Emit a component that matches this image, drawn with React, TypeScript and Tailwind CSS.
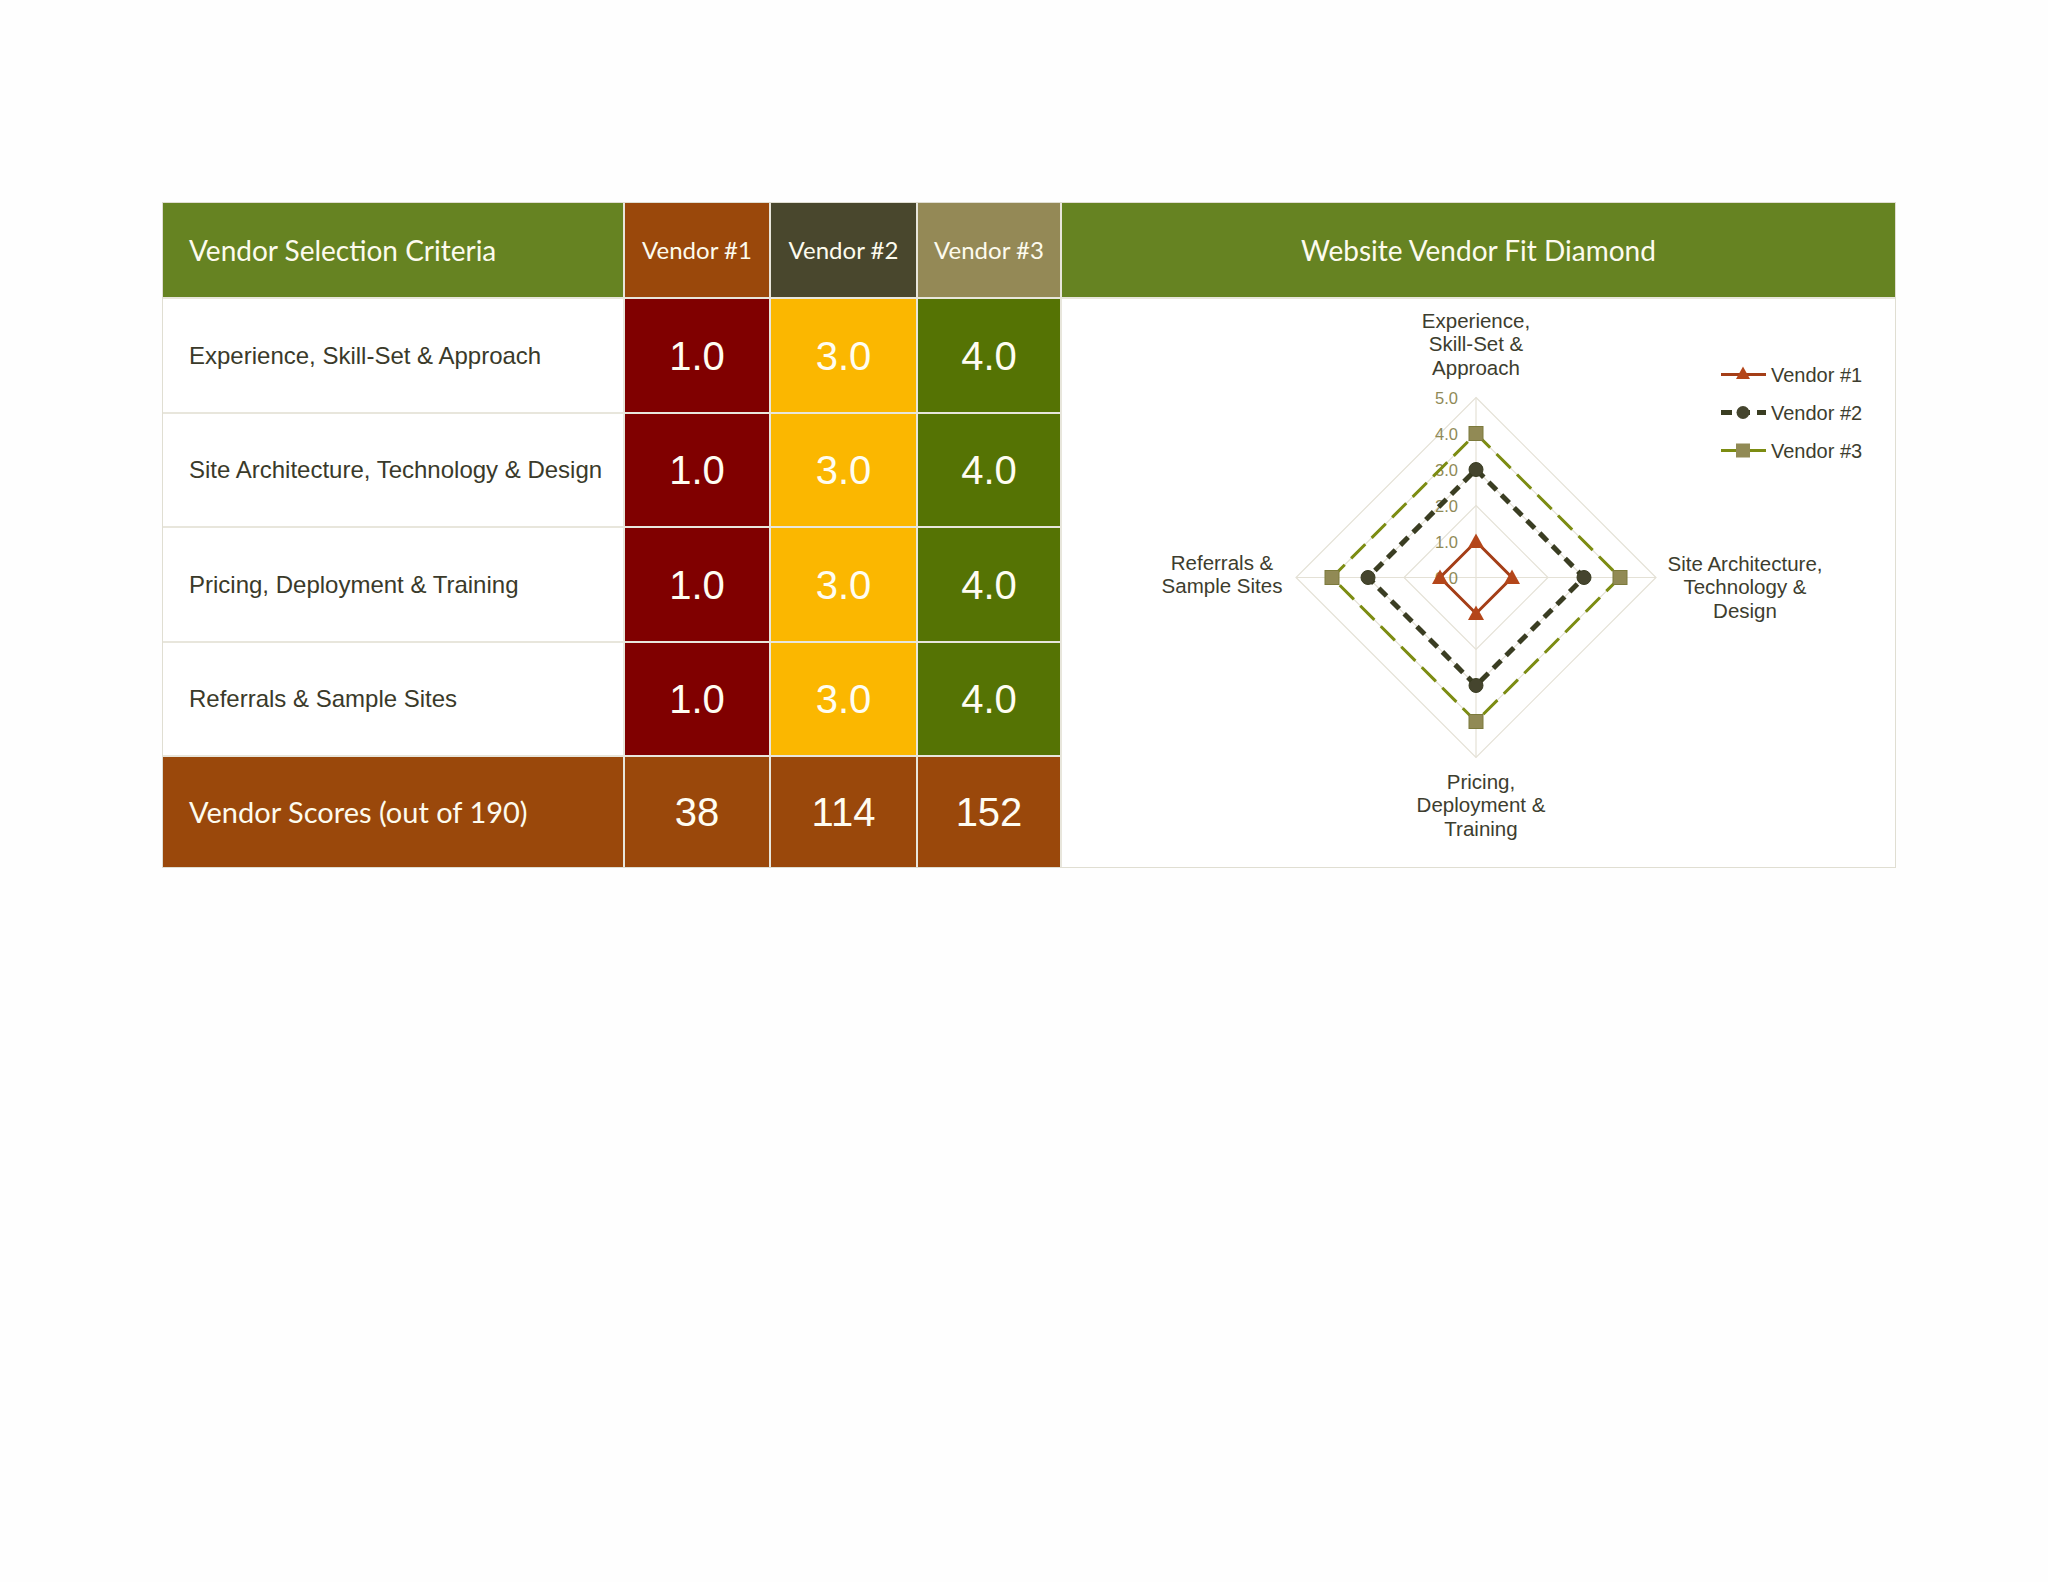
const criteria = [
  'Experience, Skill-Set & Approach',
  'Site Architecture, Technology & Design',
  'Pricing, Deployment & Training',
  'Referrals & Sample Sites',
]

const cx = 414
const cy = 277
const unit = 36

function diamond(r: number) {
  return `${cx},${cy - r} ${cx + r},${cy} ${cx},${cy + r} ${cx - r},${cy}`
}

function FitDiamond() {
  const v1 = unit * 1
  const v2 = unit * 3
  const v3 = unit * 4
  const pts = (r: number) => [
    [cx, cy - r],
    [cx + r, cy],
    [cx, cy + r],
    [cx - r, cy],
  ]
  const tri = (x: number, y: number, s = 8) => `${x},${y - s} ${x + s},${y + s * 0.8} ${x - s},${y + s * 0.8}`
  return (
    <svg width="100%" height="100%" viewBox="0 0 833 565" className="block">
      {/* grid */}
      {[1, 2, 3, 4, 5].map((k) => (
        <polygon key={k} points={diamond(k * unit)} fill="none" stroke="#e4e1d6" strokeWidth="1.2" />
      ))}
      <line x1={cx} y1={cy - 5 * unit} x2={cx} y2={cy + 5 * unit} stroke="#e4e1d6" strokeWidth="1.2" />
      <line x1={cx - 5 * unit} y1={cy} x2={cx + 5 * unit} y2={cy} stroke="#e4e1d6" strokeWidth="1.2" />

      {/* tick labels */}
      <g fontFamily="Liberation Sans, Arial, sans-serif" fontSize="16.5" fill="#8f8a57" textAnchor="end">
        {[0, 1, 2, 3, 4, 5].map((k) => (
          <text key={k} x={cx - 18} y={cy - k * unit + 6}>{`${k}.0`}</text>
        ))}
      </g>

      {/* vendor #3 */}
      <polygon points={diamond(v3)} fill="none" stroke="#7c8c12" strokeWidth="3" strokeDasharray="20 9" />
      {pts(v3).map(([x, y], i) => (
        <rect key={i} x={x - 7} y={y - 7} width="14" height="14" fill="#918a55" stroke="#7c7a3c" strokeWidth="1" />
      ))}

      {/* vendor #2 */}
      <polygon points={diamond(v2)} fill="none" stroke="#3a3d22" strokeWidth="5" strokeDasharray="11 7" />
      {pts(v2).map(([x, y], i) => (
        <circle key={i} cx={x} cy={y} r="7" fill="#45452e" stroke="#3a3d22" strokeWidth="1" />
      ))}

      {/* vendor #1 */}
      <polygon points={diamond(v1)} fill="none" stroke="#a43e17" strokeWidth="3" />
      {pts(v1).map(([x, y], i) => (
        <polygon key={i} points={tri(x, y)} fill="#b4461a" />
      ))}

      {/* category labels */}
      <g fontFamily="Liberation Sans, Arial, sans-serif" fontSize="20.5" fill="#3d3d2e" textAnchor="middle">
        <text x="414" y="27">Experience,</text>
        <text x="414" y="50.5">Skill-Set &amp;</text>
        <text x="414" y="74">Approach</text>

        <text x="683" y="270">Site Architecture,</text>
        <text x="683" y="293.5">Technology &amp;</text>
        <text x="683" y="317">Design</text>

        <text x="419" y="488">Pricing,</text>
        <text x="419" y="511.5">Deployment &amp;</text>
        <text x="419" y="535">Training</text>

        <text x="160" y="269">Referrals &amp;</text>
        <text x="160" y="292.5">Sample Sites</text>
      </g>

      {/* legend */}
      <g fontFamily="Liberation Sans, Arial, sans-serif" fontSize="20" fill="#3d3d2e">
        <line x1="659" y1="74" x2="704" y2="74" stroke="#a43e17" strokeWidth="3" />
        <polygon points={tri(681, 73, 7)} fill="#b4461a" />
        <text x="709" y="81">Vendor #1</text>

        <line x1="659" y1="112" x2="704" y2="112" stroke="#3a3d22" strokeWidth="5" strokeDasharray="11 7" />
        <circle cx="681" cy="112" r="6.5" fill="#45452e" />
        <text x="709" y="119">Vendor #2</text>

        <line x1="659" y1="150" x2="704" y2="150" stroke="#7c8c12" strokeWidth="3" strokeDasharray="20 9" />
        <rect x="674" y="143" width="14" height="14" fill="#918a55" />
        <text x="709" y="157">Vendor #3</text>
      </g>
    </svg>
  )
}

export default function App() {
  const head = "font-['Lato'] text-[#fdfbee]"
  const num = "font-['Liberation_Sans'] text-[40px] text-[#fffdf2] flex items-center justify-center"
  const crit = "bg-white flex items-center pl-[26px] font-['Liberation_Sans'] text-[24px] text-[#3a3a2a]"
  return (
    <div className="w-[2048px] h-[1582px] bg-[#fefefe]">
      <div className="pl-[162px] pt-[202px]">
        <div className="w-[1734px] grid grid-cols-[460px_144px_145px_142px_833px] grid-rows-[94px_113px_112px_113px_112px_110px] gap-[2px] bg-[#e8e6dc] border border-[#e0ded2]">
          {/* header */}
          <div className={`${head} bg-[#668322] text-[28px] flex items-center pl-[26px]`}>Vendor Selection Criteria</div>
          <div className={`${head} bg-[#9a480b] text-[24px] flex items-center justify-center`}>Vendor #1</div>
          <div className={`${head} bg-[#49472d] text-[24px] flex items-center justify-center`}>Vendor #2</div>
          <div className={`${head} bg-[#948956] text-[24px] flex items-center justify-center`}>Vendor #3</div>
          <div className={`${head} bg-[#668322] text-[28px] flex items-center justify-center`}>Website Vendor Fit Diamond</div>

          {/* first criteria row + chart spanning body */}
          <div className={crit}>{criteria[0]}</div>
          <div className={`${num} bg-[#800000]`}>1.0</div>
          <div className={`${num} bg-[#fbb700]`}>3.0</div>
          <div className={`${num} bg-[#557304]`}>4.0</div>
          <div className="row-span-5 bg-white">
            <FitDiamond />
          </div>

          {criteria.slice(1).map((c) => (
            <div key={c} className="contents">
              <div className={crit}>{c}</div>
              <div className={`${num} bg-[#800000]`}>1.0</div>
              <div className={`${num} bg-[#fbb700]`}>3.0</div>
              <div className={`${num} bg-[#557304]`}>4.0</div>
            </div>
          ))}

          {/* totals */}
          <div className={`${head} bg-[#9a480b] text-[29px] flex items-center pl-[26px]`}>Vendor Scores (out of 190)</div>
          <div className={`${num} bg-[#9a480b]`}>38</div>
          <div className={`${num} bg-[#9a480b]`}>114</div>
          <div className={`${num} bg-[#9a480b]`}>152</div>
        </div>
      </div>
    </div>
  )
}
